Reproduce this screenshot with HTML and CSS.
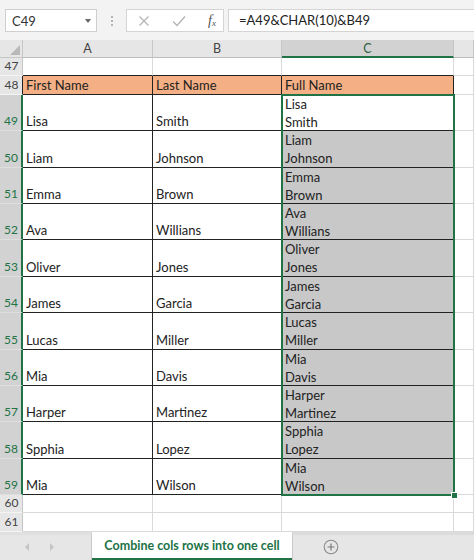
FILE: index.html
```html
<!DOCTYPE html>
<html>
<head>
<meta charset="utf-8">
<link rel="stylesheet" href="styles.css">
</head>
<body>
<div class="app">
  <div class="topbar">
    <div class="namebox"><span class="nb-text">C49</span><span class="nb-arrow"></span></div>
    <div class="grip"><i></i><i></i><i></i></div>
    <div class="fbuttons">
      <svg class="ic" width="14" height="14" viewBox="0 0 14 14"><path d="M2.5 2.5 L11.5 11.5 M11.5 2.5 L2.5 11.5" stroke="#b4b4b4" stroke-width="1.3" fill="none"/></svg>
      <svg class="ic" width="16" height="14" viewBox="0 0 16 14"><path d="M2 7.5 L6 11.5 L14 2.5" stroke="#b4b4b4" stroke-width="1.4" fill="none"/></svg>
      <span class="fx">f<sub>x</sub></span>
    </div>
    <div class="formula">=A49&amp;CHAR(10)&amp;B49</div>
  </div>

  <div class="sheet">
    <div class="corner"><span class="tri"></span></div>
    <div class="colhdr">A</div>
    <div class="colhdr">B</div>
    <div class="colhdr sel">C</div>
    <div class="colhdr"></div>

    <div class="rowhdr">47</div>
    <div class="cell top"></div><div class="cell top"></div><div class="cell top"></div><div class="cell"></div>

    <div class="rowhdr blk">48</div>
    <div class="cell bd hd">First Name</div><div class="cell bd hd">Last Name</div><div class="cell bd hd">Full Name</div><div class="cell"></div>

    <div class="rowhdr sel">49</div>
    <div class="cell bd">Lisa</div><div class="cell bd">Smith</div><div class="cell bd two">Lisa<br>Smith</div><div class="cell"></div>

    <div class="rowhdr sel">50</div>
    <div class="cell bd">Liam</div><div class="cell bd">Johnson</div><div class="cell bd two hl">Liam<br>Johnson</div><div class="cell"></div>

    <div class="rowhdr sel">51</div>
    <div class="cell bd">Emma</div><div class="cell bd">Brown</div><div class="cell bd two hl">Emma<br>Brown</div><div class="cell"></div>

    <div class="rowhdr sel">52</div>
    <div class="cell bd">Ava</div><div class="cell bd">Willians</div><div class="cell bd two hl">Ava<br>Willians</div><div class="cell"></div>

    <div class="rowhdr sel">53</div>
    <div class="cell bd">Oliver</div><div class="cell bd">Jones</div><div class="cell bd two hl">Oliver<br>Jones</div><div class="cell"></div>

    <div class="rowhdr sel">54</div>
    <div class="cell bd">James</div><div class="cell bd">Garcia</div><div class="cell bd two hl">James<br>Garcia</div><div class="cell"></div>

    <div class="rowhdr sel">55</div>
    <div class="cell bd">Lucas</div><div class="cell bd">Miller</div><div class="cell bd two hl">Lucas<br>Miller</div><div class="cell"></div>

    <div class="rowhdr sel">56</div>
    <div class="cell bd">Mia</div><div class="cell bd">Davis</div><div class="cell bd two hl">Mia<br>Davis</div><div class="cell"></div>

    <div class="rowhdr sel">57</div>
    <div class="cell bd">Harper</div><div class="cell bd">Martinez</div><div class="cell bd two hl">Harper<br>Martinez</div><div class="cell"></div>

    <div class="rowhdr sel">58</div>
    <div class="cell bd">Spphia</div><div class="cell bd">Lopez</div><div class="cell bd two hl">Spphia<br>Lopez</div><div class="cell"></div>

    <div class="rowhdr sel">59</div>
    <div class="cell bd">Mia</div><div class="cell bd">Wilson</div><div class="cell bd two hl">Mia<br>Wilson</div><div class="cell"></div>

    <div class="rowhdr">60</div>
    <div class="cell"></div><div class="cell"></div><div class="cell"></div><div class="cell"></div>

    <div class="rowhdr">61</div>
    <div class="cell"></div><div class="cell"></div><div class="cell"></div><div class="cell"></div>

    <div class="selection"><span class="handle"></span></div>
  </div>

  <div class="tabbar">
    <div class="nav">
      <svg width="8" height="10" viewBox="0 0 8 10"><path d="M6 1 L2 5 L6 9 Z" fill="#c4c4c4"/></svg>
      <svg width="8" height="10" viewBox="0 0 8 10"><path d="M2 1 L6 5 L2 9 Z" fill="#c4c4c4"/></svg>
    </div>
    <div class="tab">Combine cols rows into one cell</div>
    <div class="rest">
      <svg class="plus" width="16" height="16" viewBox="0 0 16 16"><circle cx="8" cy="8" r="6.8" fill="none" stroke="#8a8a8a" stroke-width="1.1"/><path d="M8 4.5 V11.5 M4.5 8 H11.5" stroke="#7a7a7a" stroke-width="1.2"/></svg>
    </div>
  </div>
</div>
</body>
</html>
```

FILE: styles.css
```css
html, body {
  margin: 0;
  padding: 0;
  background: #ffffff;
}
body {
  font-family: Lato, "Liberation Sans", Arial, sans-serif;
  color: #222;
}
.app {
  width: 474px;
  height: 560px;
  overflow: hidden;
  display: flex;
  flex-direction: column;
}

/* ---------- formula bar ---------- */
.topbar {
  height: 40px;
  flex: none;
  box-sizing: border-box;
  background: #f3f3f3;
  display: flex;
  align-items: flex-start;
  padding-top: 9px;
}
.namebox {
  margin-left: 5px;
  width: 92px;
  height: 23px;
  box-sizing: border-box;
  background: #fff;
  border: 1px solid #cfcfcf;
  display: flex;
  align-items: center;
  justify-content: space-between;
  padding: 0 5px 0 6px;
}
.nb-text {
  font-size: 13px;
  color: #333;
}
.nb-arrow {
  width: 0;
  height: 0;
  border-left: 3.5px solid transparent;
  border-right: 3.5px solid transparent;
  border-top: 4px solid #666;
}
.grip {
  width: 29px;
  height: 23px;
  display: flex;
  flex-direction: column;
  align-items: center;
  justify-content: center;
  gap: 2px;
}
.grip i {
  display: block;
  width: 2px;
  height: 2px;
  background: #b4b4b4;
}
.fbuttons {
  width: 98px;
  height: 23px;
  box-sizing: border-box;
  background: #fff;
  border: 1px solid #d4d4d4;
  display: flex;
  align-items: center;
  padding-left: 10px;
  gap: 20px;
}
.fx {
  font-family: "Liberation Serif", "DejaVu Serif", serif;
  font-style: italic;
  font-size: 14px;
  color: #555;
  margin-left: 1px;
}
.fx sub {
  font-size: 9px;
  vertical-align: -1px;
}
.formula {
  margin-left: 4px;
  flex: 1;
  height: 23px;
  box-sizing: border-box;
  background: #fff;
  border: 1px solid #d4d4d4;
  border-right: none;
  font-size: 13px;
  color: #222;
  padding-left: 10px;
  line-height: 21px;
}

/* ---------- sheet grid ---------- */
.sheet {
  position: relative;
  flex: none;
  display: grid;
  grid-template-columns: 23px 130px 129px 172px 20px;
  grid-template-rows: 18px 18px 19px repeat(11, 36.3636px) 18px 19px;
  font-size: 13px;
}
.corner {
  position: relative;
  background: #e6e6e6;
  border-right: 1px solid #c6c6c6;
  border-bottom: 1px solid #c6c6c6;
  box-sizing: border-box;
}
.tri {
  position: absolute;
  right: 2px;
  bottom: 2px;
  width: 0;
  height: 0;
  border-left: 10px solid transparent;
  border-bottom: 10px solid #b9b9b9;
}
.colhdr {
  box-sizing: border-box;
  background: #e6e6e6;
  border-right: 1px solid #c6c6c6;
  border-bottom: 1px solid #bdbdbd;
  display: flex;
  align-items: center;
  justify-content: center;
  font-size: 12.5px;
  color: #444;
}
.colhdr.sel {
  background: #d2d2d2;
  border-bottom: 2px solid #217346;
  color: #2f5f43;
}
.rowhdr {
  box-sizing: border-box;
  background: #e6e6e6;
  border-right: 1px solid #c6c6c6;
  border-bottom: 1px solid #f4f4f4;
  display: flex;
  align-items: flex-end;
  justify-content: center;
  padding-bottom: 1px;
  padding-left: 1px;
  font-size: 12px;
  line-height: 16px;
  color: #444;
}
.rowhdr.blk {
  border-right: 1px solid #222;
}
.rowhdr.sel {
  background: #d2d2d2;
  border-right: 2px solid #217346;
  border-bottom-color: #dedede;
  color: #217346;
}
.cell {
  box-sizing: border-box;
  border-right: 1px solid #d9d9d9;
  border-bottom: 1px solid #d9d9d9;
  display: flex;
  align-items: flex-end;
  padding: 0 0 0 3px;
  line-height: 18px;
  white-space: nowrap;
  overflow: hidden;
  color: #222;
}
.cell.top {
  border-bottom: 1px solid #222;
}
.cell.bd {
  border-right: 1px solid #222;
  border-bottom: 1px solid #222;
}
.cell.hd {
  background: #f4b084;
}
.cell.two {
  display: block;
  padding-top: 0;
}
.cell.hl {
  background: #c8c8c8;
}

/* selection outline over C49:C59 */
.selection {
  position: absolute;
  grid-column: 4 / 5;
  grid-row: 4 / 15;
  top: -1px;
  left: -1px;
  right: -1px;
  bottom: -1px;
  border: 2px solid #217346;
  pointer-events: none;
}
.handle {
  position: absolute;
  right: -5px;
  bottom: -5px;
  width: 5px;
  height: 5px;
  background: #217346;
  border: 1px solid #fff;
}

/* ---------- sheet tabs ---------- */
.tabbar {
  flex: 1;
  display: flex;
  background: #e6e6e6;
}
.nav {
  width: 92px;
  box-sizing: border-box;
  border-top: 3px solid #e0e0e0;
  border-right: 1px solid #c8c8c8;
  display: flex;
  align-items: center;
  padding-left: 23px;
  gap: 17px;
}
.tab {
  width: 200px;
  box-sizing: border-box;
  background: #fff;
  border-bottom: 2px solid #217346;
  color: #217346;
  font-weight: bold;
  font-size: 12.5px;
  display: flex;
  align-items: center;
  justify-content: center;
  padding-top: 2px;
}
.rest {
  flex: 1;
  box-sizing: border-box;
  border-top: 3px solid #dcdcdc;
  border-left: 1px solid #c8c8c8;
  display: flex;
  align-items: center;
  padding-left: 30px;
}
```
